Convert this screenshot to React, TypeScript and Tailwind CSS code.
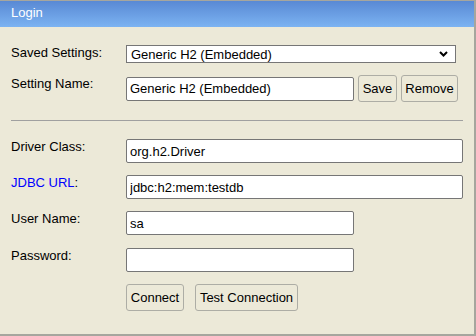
export default function App() {
  const label = "w-[115px] shrink-0 leading-[15px] text-black";
  const input =
    "h-[24px] shrink-0 rounded-[2px] border border-[#767676] bg-white px-[3px] leading-[15px] text-black outline-none";
  const button =
    "h-[27px] shrink-0 rounded-[3px] border border-[#adada5] bg-[#ece9d8] leading-[15px] text-black";

  return (
    <div className="h-[336px] w-[476px] border-t border-r-2 border-b-2 border-[#a6a69e] bg-[#ece9d8] font-['Liberation_Sans',Arial,sans-serif] text-[13px]">
      {/* Title bar */}
      <div className="h-[26px] bg-gradient-to-b from-[#5989d4] to-[#7cb3f2] pl-[11px] pt-[4px] leading-[15px] text-white">
        Login
      </div>

      <div className="px-[11px]">
        {/* Saved settings */}
        <div className="mt-[18px] flex items-start">
          <span className={label}>Saved Settings:</span>
          <div className="flex h-[18px] w-[330px] items-center justify-between border border-[#767676] bg-white pl-[4px] pr-[6px] leading-[15px]">
            <span>Generic H2 (Embedded)</span>
            <svg width="9" height="6" viewBox="0 0 9 6" className="mr-[1px]">
              <path d="M1 1l3.5 3.5L8 1" fill="none" stroke="#000" strokeWidth="2" />
            </svg>
          </div>
        </div>

        {/* Setting name */}
        <div className="mt-[12px] flex h-[27px] items-center">
          <span className={`${label} self-start mt-[1px]`}>Setting Name:</span>
          <input className={`${input} w-[228px]`} defaultValue="Generic H2 (Embedded)" />
          <button className={`${button} ml-[4px] w-[39px]`}>Save</button>
          <button className={`${button} ml-[4px] w-[57px]`}>Remove</button>
        </div>

        <div className="mt-[18px] h-px w-[452px] bg-[#a0a0a0]" />

        {/* Connection fields */}
        <div className="mt-[18px] flex items-start">
          <span className={label}>Driver Class:</span>
          <input className={`${input} w-[337px]`} defaultValue="org.h2.Driver" />
        </div>
        <div className="mt-[12px] flex items-start">
          <span className={label}>
            <span className="text-[#0000ff]">JDBC URL</span>:
          </span>
          <input className={`${input} w-[337px]`} defaultValue="jdbc:h2:mem:testdb" />
        </div>
        <div className="mt-[12px] flex items-start">
          <span className={label}>User Name:</span>
          <input className={`${input} w-[228px]`} defaultValue="sa" />
        </div>
        <div className="mt-[13px] flex items-start">
          <span className={label}>Password:</span>
          <input type="password" className={`${input} w-[228px]`} defaultValue="" />
        </div>

        <div className="mt-[12px] flex pl-[115px]">
          <button className={`${button} h-[26px] w-[58px]`}>Connect</button>
          <button className={`${button} ml-[11px] h-[26px] w-[103px]`}>Test Connection</button>
        </div>
      </div>
    </div>
  );
}
